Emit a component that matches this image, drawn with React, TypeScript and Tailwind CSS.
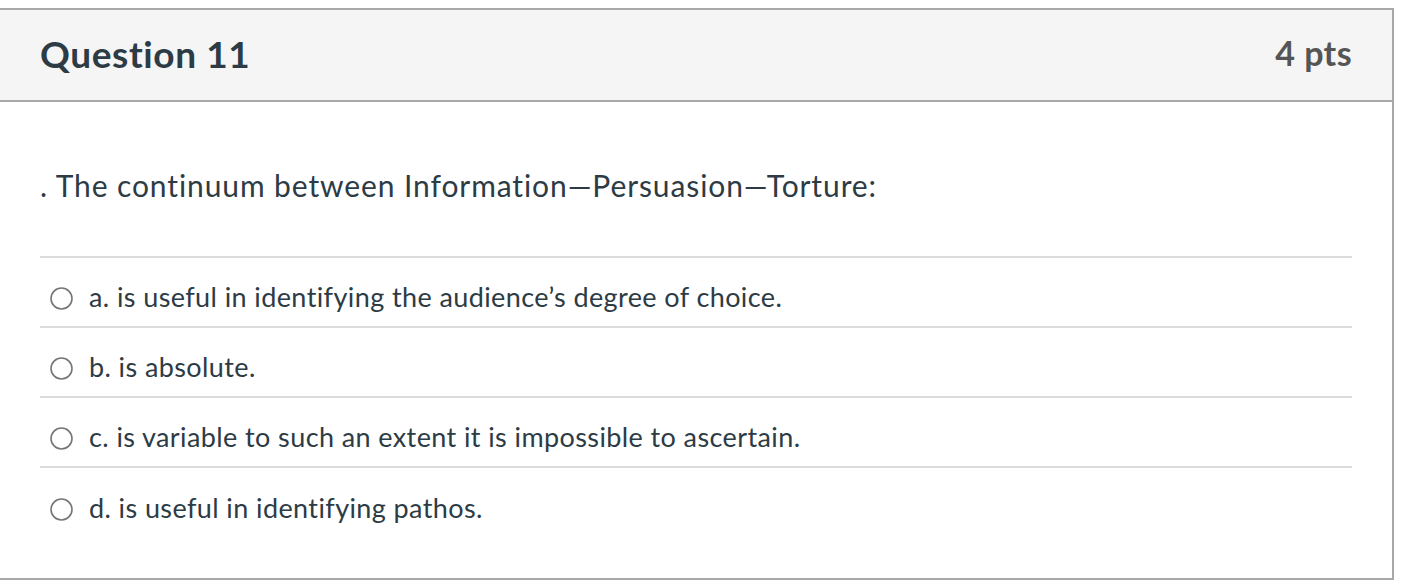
import React from "react";

const answers = [
  "a. is useful in identifying the audience\u2019s degree of choice.",
  "b. is absolute.",
  "c. is variable to such an extent it is impossible to ascertain.",
  "d. is useful in identifying pathos.",
];

export default function App() {
  return (
    <div className="h-[584px] bg-white pt-2 font-['Lato',sans-serif] text-[#2d3b45]">
      <div className="w-[1394px] border-2 border-l-0 border-[#a8a8a8]">
        <div className="flex h-[92px] items-center justify-between border-b-2 border-[#a8a8a8] bg-[#f5f5f5] px-10 pb-1">
          <h2 className="text-[37px] font-bold leading-none tracking-[0.6px]">Question 11</h2>
          <span className="text-[34px] font-bold leading-none tracking-[0.4px] text-[#555]">4 pts</span>
        </div>

        <div className="px-10 pt-[63px] pb-10">
          <p className="text-[30px] leading-[40px] tracking-[0.9px]">. The continuum between Information—Persuasion—Torture:</p>

          <div className="mt-[51px] border-t-2 border-[#dcdcdc]">
            {answers.map((a, i) => (
              <AnswerRow key={a} label={a} last={i === answers.length - 1} />
            ))}
          </div>
        </div>
      </div>
    </div>
  );
}

function AnswerRow({ label, last }: { label: string; last: boolean }) {
  return (
    <div className={`flex h-[70px] items-center gap-4 pt-[9px] pl-[10px] ${last ? "" : "border-b-2 border-[#dcdcdc]"}`}>
      <svg width="23" height="23" viewBox="0 0 23 23" className="mt-[3px] shrink-0">
        <circle cx="11.5" cy="11.5" r="10.5" fill="white" stroke="#767676" strokeWidth="1.6" />
      </svg>
      <span className="text-[27px] leading-none tracking-[0.4px]">{label}</span>
    </div>
  );
}
